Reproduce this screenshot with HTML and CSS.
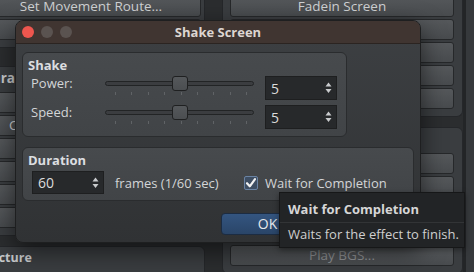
FILE: index.html
```html
<!DOCTYPE html>
<html>
<head>
<meta charset="utf-8">
<link rel="stylesheet" href="styles.css">
</head>
<body>
<div class="app">
  <div class="col col-left">
    <div class="panel panel-move">
      <div class="btn">Set Movement Route...</div>
      <div class="btn">Get on/off Vehicle</div>
    </div>
    <div class="panel panel-char">
      <div class="hdr hdr-char">Character</div>
      <div class="btn">Change Transparency...</div>
      <div class="btn">Change Player Followers...</div>
      <div class="btn">Gather Followers</div>
      <div class="btn">Show Animation...</div>
      <div class="btn">Show Balloon Icon...</div>
      <div class="btn">Erase Event</div>
    </div>
    <div class="panel panel-pic">
      <div class="hdr hdr-pic">Picture</div>
      <div class="btn">Show Picture...</div>
    </div>
  </div>
  <div class="col col-right">
    <div class="panel panel-screen">
      <div class="btn">Fadein Screen</div>
      <div class="btn">Tint Screen...</div>
      <div class="btn">Flash Screen...</div>
      <div class="btn">Shake Screen...</div>
      <div class="btn">Set Weather Effect...</div>
    </div>
    <div class="panel panel-audio">
      <div class="hdr">Audio &amp; Video</div>
      <div class="btn">Play BGM...</div>
      <div class="btn">Fadeout BGM...</div>
      <div class="btn">Save BGM</div>
      <div class="btn">Replay BGM</div>
      <div class="btn btn-dim">Play BGS...</div>
    </div>
  </div>
  <div class="side"></div>
</div>

<div class="dialog">
  <div class="titlebar">
    <div class="lights">
      <span class="light light-red"></span>
      <span class="light"></span>
      <span class="light"></span>
    </div>
    <div class="title">Shake Screen</div>
  </div>
  <div class="dbody">
    <div class="group group-shake">
      <div class="glabel">Shake</div>
      <div class="srow">
        <div class="slabel">Power:</div>
        <div class="slider">
          <div class="track"></div>
          <div class="ticks"><i></i><i></i><i></i><i></i><i></i><i></i><i></i><i></i><i></i></div>
          <div class="handle"></div>
        </div>
        <div class="spin"><span class="val">5</span>
          <svg class="arrows" width="7" height="12" viewBox="0 0 7 12"><path d="M3.5 0.5 L6.5 4.5 L0.5 4.5 Z M0.5 7 L6.5 7 L3.5 11 Z" fill="#c9cbcd"/></svg>
        </div>
      </div>
      <div class="srow">
        <div class="slabel">Speed:</div>
        <div class="slider">
          <div class="track"></div>
          <div class="ticks"><i></i><i></i><i></i><i></i><i></i><i></i><i></i><i></i><i></i></div>
          <div class="handle"></div>
        </div>
        <div class="spin"><span class="val">5</span>
          <svg class="arrows" width="7" height="12" viewBox="0 0 7 12"><path d="M3.5 0.5 L6.5 4.5 L0.5 4.5 Z M0.5 7 L6.5 7 L3.5 11 Z" fill="#c9cbcd"/></svg>
        </div>
      </div>
    </div>
    <div class="group group-dur">
      <div class="glabel">Duration</div>
      <div class="drow">
        <div class="spin"><span class="val">60</span>
          <svg class="arrows" width="7" height="12" viewBox="0 0 7 12"><path d="M3.5 0.5 L6.5 4.5 L0.5 4.5 Z M0.5 7 L6.5 7 L3.5 11 Z" fill="#c9cbcd"/></svg>
        </div>
        <span class="frames">frames (1/60 sec)</span>
        <div class="check">
          <span class="box"><svg width="12" height="12" viewBox="0 0 12 12"><path d="M2 6.2 L4.8 9.3 L10 2.2" fill="none" stroke="#f2f2f2" stroke-width="2.2" stroke-linecap="round" stroke-linejoin="round"/></svg></span>
          <span>Wait for Completion</span>
        </div>
      </div>
    </div>
    <div class="btnrow">
      <div class="dbtn dbtn-ok">OK</div>
      <div class="dbtn">Cancel</div>
    </div>
  </div>
</div>

<div class="tooltip">
  <div class="tt-title">Wait for Completion</div>
  <div class="tt-text">Waits for the effect to finish.</div>
</div>
</body>
</html>
```

FILE: styles.css
```css
* { box-sizing: border-box; }

html, body {
  margin: 0;
  padding: 0;
  width: 474px;
  height: 272px;
  overflow: hidden;
  background: #2b2d2f;
  font-family: "Open Sans", "Noto Sans", sans-serif;
  font-size: 14px;
  color: #d0d2d4;
}

/* ---------- background application ---------- */
.app {
  display: flex;
  margin: -4px 0 0 -27px;
  height: 276px;
  overflow: hidden;
}

.col {
  display: flex;
  flex-direction: column;
  flex: none;
}

.col-left { width: 232px; }
.col-right { width: 241px; margin-left: 17px; }

.panel {
  background: #3a3d40;
  border: 1px solid #25272a;
  border-radius: 6px;
  display: flex;
  flex-direction: column;
  gap: 2px;
  flex: none;
}

.col-left .panel { padding: 0 3px 7px 7px; }
.col-right .panel { padding: 0 8px 7px 7px; }

.panel-move { border-top: none; border-radius: 0 0 6px 6px; }
.panel-char { margin-top: 18px; }
.panel-pic { margin-top: 10px; }
.panel-screen { border-top: none; border-radius: 0 0 6px 6px; }
.panel-audio { margin-top: 10px; }

.hdr {
  height: 23px;
  line-height: 22px;
  font-weight: bold;
  font-size: 13.5px;
  color: #c9cbcd;
  padding-left: 7px;
  white-space: nowrap;
}

.hdr-char { padding-left: 0; margin-left: -6px; }
.hdr-pic { font-size: 12.5px; padding-left: 6px; }

.btn {
  height: 21px;
  line-height: 19px;
  border: 1px solid #26282a;
  border-radius: 3px;
  background: linear-gradient(#55585b, #484b4e);
  text-align: center;
  color: #cfd1d3;
  font-size: 13.5px;
  white-space: nowrap;
  overflow: hidden;
}

.btn-dim { color: #8e9092; }

.side {
  width: 11px;
  flex: none;
  border-left: 3px solid #232527;
  background: #36393c;
}

/* ---------- dialog ---------- */
.dialog {
  position: absolute;
  left: 15px;
  top: 20px;
  width: 406px;
  height: 223px;
  border: 1px solid #1e1f20;
  border-radius: 8px;
  overflow: hidden;
  background: linear-gradient(#3d4043, #303234);
  box-shadow: 0 8px 24px rgba(0, 0, 0, 0.55);
  display: flex;
  flex-direction: column;
}

.titlebar {
  height: 23px;
  flex: none;
  background: #403531;
  border-bottom: 1px solid #2b2421;
  position: relative;
  display: flex;
  align-items: center;
  justify-content: center;
}

.lights {
  position: absolute;
  left: 6px;
  top: 5px;
  display: flex;
  gap: 7px;
}

.light {
  width: 12px;
  height: 12px;
  border-radius: 50%;
  background: #5a5350;
}

.light-red { background: #ee564e; }

.title {
  font-weight: bold;
  font-size: 13px;
  color: #ddd6d1;
}

.dbody {
  padding: 8px 6px 0 6px;
  display: flex;
  flex-direction: column;
}

.group {
  border: 1px solid #2a2c2e;
  border-radius: 6px;
  background: linear-gradient(#474a4d, #414447);
  padding: 3px 9px 7px 5px;
}

.group-shake { width: 325px; }
.group-dur { width: 392px; margin-top: 10px; padding-bottom: 6px; }

.glabel {
  height: 18px;
  line-height: 18px;
  font-weight: bold;
  font-size: 13px;
  color: #dcdee0;
  margin-bottom: 2px;
}

.srow {
  display: grid;
  grid-template-columns: 77px 160px 72px;
  align-items: start;
  height: 24px;
}

.srow + .srow { margin-top: 5px; }

.slabel {
  line-height: 15px;
  padding-left: 3px;
  font-size: 13px;
  color: #d3d5d7;
}

.slider {
  position: relative;
  width: 149px;
  padding-top: 5px;
}

.track {
  height: 5px;
  border: 1px solid #222425;
  border-radius: 3px;
  background: #3b3d40;
}

.ticks {
  display: flex;
  justify-content: space-between;
  padding: 0 7px 0 10px;
  margin-top: 6px;
}

.ticks i {
  display: block;
  width: 1px;
  height: 3px;
  background: #606366;
}

.handle {
  position: absolute;
  left: 67px;
  top: 0;
  width: 16px;
  height: 15px;
  border: 1px solid #1f2021;
  border-radius: 3px;
  background: linear-gradient(#55585b, #4b4e51);
}

.spin {
  width: 72px;
  height: 24px;
  background: #27292b;
  border: 1px solid #1e1f20;
  display: flex;
  align-items: center;
  justify-content: space-between;
  padding: 0 4px 0 5px;
}

.val {
  font-size: 14px;
  color: #dcdcdc;
}

.arrows { display: block; }

.drow {
  display: flex;
  align-items: center;
  padding-left: 4px;
}

.drow .spin { height: 23px; }

.frames {
  width: 129px;
  margin-left: 11px;
  font-size: 13px;
  color: #d3d5d7;
}

.check {
  display: flex;
  align-items: center;
  gap: 7px;
  font-size: 13px;
  color: #d3d5d7;
}

.box {
  width: 14px;
  height: 14px;
  border: 1px solid #6a83a3;
  border-radius: 2px;
  background: #3e4e63;
  display: flex;
  align-items: center;
  justify-content: center;
}

.btnrow {
  display: flex;
  justify-content: flex-end;
  gap: 6px;
  margin-top: 12px;
  padding-right: 1px;
}

.dbtn {
  width: 93px;
  height: 22px;
  line-height: 20px;
  border: 1px solid #222426;
  border-radius: 4px;
  background: linear-gradient(#4c4f52, #424548);
  text-align: center;
  font-size: 14px;
  color: #d6d8da;
}

.dbtn-ok {
  background: linear-gradient(#345580, #2a4568);
  border-color: #1c2c42;
  color: #e6e8ea;
}

/* ---------- tooltip ---------- */
.tooltip {
  position: absolute;
  left: 279px;
  top: 192px;
  width: 186px;
  height: 56px;
  background: #222426;
  border: 1px solid #161718;
  box-shadow: 0 2px 6px rgba(0, 0, 0, 0.4);
}

.tt-title {
  padding: 8px 8px 4px 8px;
  line-height: 17px;
  font-weight: bold;
  font-size: 13px;
  color: #d6d6d6;
  border-bottom: 1px solid #323436;
  white-space: nowrap;
}

.tt-text {
  padding: 3px 8px 0 8px;
  line-height: 17px;
  font-size: 13px;
  color: #cfcfcf;
  white-space: nowrap;
}
```
